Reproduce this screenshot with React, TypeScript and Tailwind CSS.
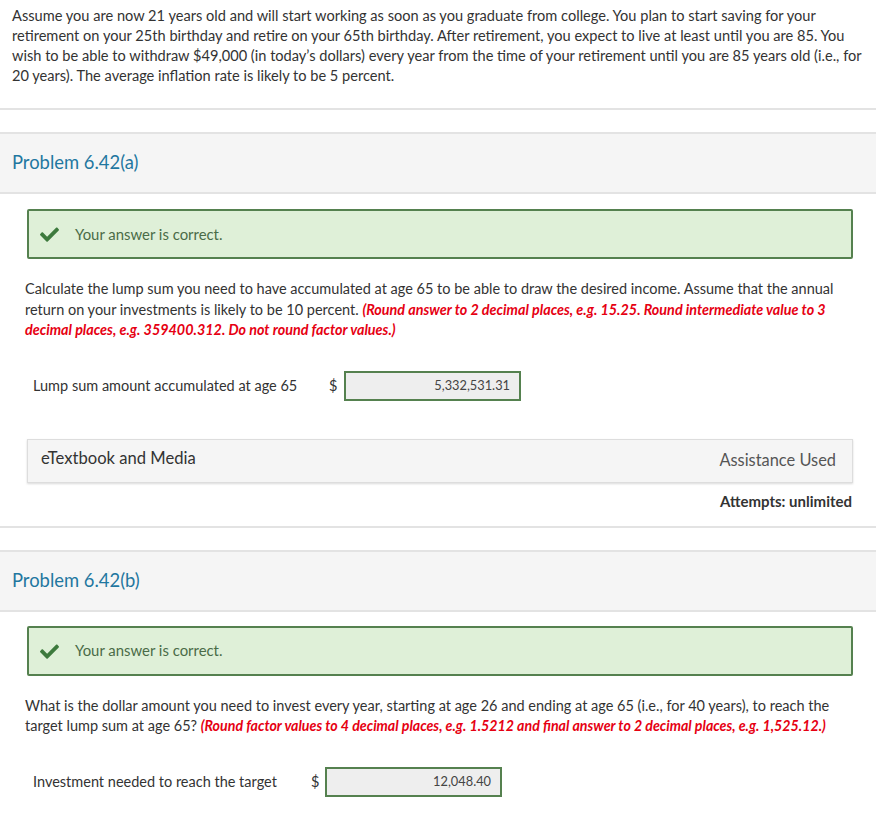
import React from "react";

const Check = () => (
  <svg width="19" height="16" viewBox="0 0 512 420" className="shrink-0">
    <path
      d="M173.9 410.3L7.5 243.9c-10-10-10-26.2 0-36.2l36.2-36.2c10-10 26.2-10 36.2 0L192 283.6 432.1 43.5c10-10 26.2-10 36.2 0l36.2 36.2c10 10 10 26.2 0 36.2L210.1 410.3c-10 10-26.2 10-36.2 0z"
      fill="#3d7a3d"
    />
  </svg>
);

const Correct = () => (
  <div className="ml-[27px] mr-[23px] h-[50px] border-2 border-[#55814f] bg-[#dff0d8] rounded-[2px] flex items-center pl-[11px] gap-[16px]">
    <Check />
    <span className="text-[14.9px] text-[#4a6b47]">Your answer is correct.</span>
  </div>
);

const Header = ({ title }: { title: string }) => (
  <div className="mt-[22px] h-[62px] border-y-2 border-[#e3e3e3] bg-[#f5f5f5] flex items-center pl-[12px]">
    <span className="text-[18.4px] text-[#1f77a0]">{title}</span>
  </div>
);

const Input = ({ value }: { value: string }) => (
  <div className="w-[177px] h-[30px] border-2 border-[#55814f] bg-[#eeeeee] flex items-center justify-end pr-[9px] text-[12.8px] text-[#444]">
    {value}
  </div>
);

export default function App() {
  return (
    <div
      className="w-[876px] bg-white text-[#333]"
      style={{ fontFamily: "Lato, 'Open Sans', sans-serif" }}
    >
      <div className="px-[12px] pt-[6px] pb-[22px] border-b-2 border-[#e3e3e3] text-[14.6px] leading-[20px] whitespace-nowrap">
        Assume you are now 21 years old and will start working as soon as you graduate from college. You plan to start saving for your
        <br />
        retirement on your 25th birthday and retire on your 65th birthday. After retirement, you expect to live at least until you are 85. You
        <br />
        wish to be able to withdraw $49,000 (in today’s dollars) every year from the time of your retirement until you are 85 years old (i.e., for
        <br />
        20 years). The average inflation rate is likely to be 5 percent.
      </div>

      <Header title="Problem 6.42(a)" />
      <div className="pt-[15px] pb-[15px] border-b-2 border-[#e3e3e3]">
        <Correct />
        <div className="mt-[20px] pl-[25px] text-[14.5px] leading-[20.5px] whitespace-nowrap">
          Calculate the lump sum you need to have accumulated at age 65 to be able to draw the desired income. Assume that the annual
          <br />
          return on your investments is likely to be 10 percent.{" "}
          <span className="text-[#e60012] font-bold italic text-[14.35px]">
            (Round answer to 2 decimal places, e.g. 15.25. Round intermediate value to 3
            <br />
            decimal places, e.g. 359400.312. Do not round factor values.)
          </span>
        </div>
        <div className="mt-[30px] pl-[33px] flex items-center text-[14.5px]">
          <span className="w-[296px]">Lump sum amount accumulated at age 65</span>
          <span className="w-[15px]">$</span>
          <Input value="5,332,531.31" />
        </div>
        <div className="mt-[38px] ml-[27px] mr-[23px] h-[44px] border border-[#dddddd] bg-[#f5f5f5] shadow-[0_1px_2px_rgba(0,0,0,0.15)] flex items-center justify-between pl-[13px] pr-[16px]">
          <span className="text-[16.6px] text-[#333] -mt-[4px]">eTextbook and Media</span>
          <span className="text-[16.4px] text-[#555]">Assistance Used</span>
        </div>
        <div className="mt-[8px] pr-[24px] text-right text-[15px] font-bold leading-[20px]">Attempts: unlimited</div>
      </div>

      <Header title="Problem 6.42(b)" />
      <div className="pt-[14px] pb-[16px]">
        <Correct />
        <div className="mt-[20px] pl-[25px] text-[14.5px] leading-[20.5px] whitespace-nowrap">
          What is the dollar amount you need to invest every year, starting at age 26 and ending at age 65 (i.e., for 40 years), to reach the
          <br />
          target lump sum at age 65?{" "}
          <span className="text-[#e60012] font-bold italic text-[14.2px]">
            (Round factor values to 4 decimal places, e.g. 1.5212 and final answer to 2 decimal places, e.g. 1,525.12.)
          </span>
        </div>
        <div className="mt-[30px] pl-[33px] flex items-center text-[14.5px]">
          <span className="w-[278px]">Investment needed to reach the target</span>
          <span className="w-[14px]">$</span>
          <Input value="12,048.40" />
        </div>
      </div>
    </div>
  );
}
